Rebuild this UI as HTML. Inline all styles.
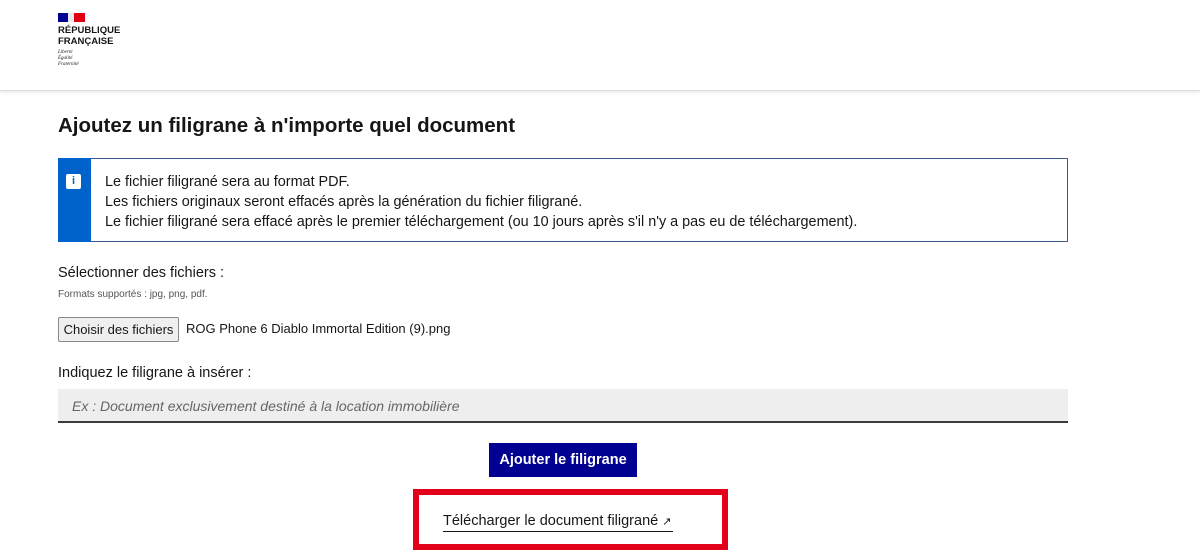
<!DOCTYPE html><html><head><meta charset="utf-8"><style>
body{margin:0;width:1200px;height:552px;overflow:hidden;background:#fff;font-family:"Liberation Sans",sans-serif;color:#161616;position:relative}
.a{position:absolute}
</style></head><body>
<div class="a" style="left:0;top:0;width:1200px;height:90px;border-bottom:1px solid #ddd;box-shadow:0 2px 3px rgba(0,0,0,.08)"></div>
<div class="a" style="left:58px;top:13px;width:10px;height:9px;background:#000091"></div>
<div class="a" style="left:68px;top:13px;width:6px;height:9px;background:#e8e8f0"></div>
<div class="a" style="left:74px;top:13px;width:11px;height:9px;background:#e1000f"></div>
<div class="a" style="left:58px;top:25px;font-size:9.5px;font-weight:bold;line-height:11px">RÉPUBLIQUE<br>FRANÇAISE</div>
<div class="a" style="left:58px;top:50px;font-size:5px;font-style:italic;line-height:6px;font-family:'Liberation Serif',serif">Liberté<br>Égalité<br>Fraternité</div>
<div class="a" style="left:58px;top:114px;font-size:20.5px;font-weight:bold">Ajoutez un filigrane à n'importe quel document</div>
<div class="a" style="left:58px;top:158px;width:1010px;height:84px;border:1px solid #3a5a8a;box-sizing:border-box"></div>
<div class="a" style="left:58px;top:158px;width:33px;height:84px;background:#0063cb"></div>
<div class="a" style="left:66px;top:174px;width:15px;height:15px;background:#fff;border-radius:2px;color:#0063cb;font-size:11px;font-weight:bold;text-align:center;line-height:15px">i</div>
<div class="a" style="left:105px;top:172px;font-size:14.4px;line-height:20px">Le fichier filigrané sera au format PDF.<br>Les fichiers originaux seront effacés après la génération du fichier filigrané.<br>Le fichier filigrané sera effacé après le premier téléchargement (ou 10 jours après s'il n'y a pas eu de téléchargement).</div>
<div class="a" style="left:58px;top:265px;font-size:14.5px">Sélectionner des fichiers :</div>
<div class="a" style="left:58px;top:289px;font-size:10px;color:#555">Formats supportés : jpg, png, pdf.</div>
<div class="a" style="left:58px;top:317px;width:121px;height:25px;border:1px solid #888;border-radius:2px;background:#efefef;box-sizing:border-box;font-size:13px;line-height:23px;text-align:center">Choisir des fichiers</div>
<div class="a" style="left:186px;top:321px;font-size:13px">ROG Phone 6 Diablo Immortal Edition (9).png</div>
<div class="a" style="left:58px;top:365px;font-size:14.5px">Indiquez le filigrane à insérer :</div>
<div class="a" style="left:58px;top:389px;width:1010px;height:34px;background:#eee;border-bottom:2px solid #3a3a3a;box-sizing:border-box"></div>
<div class="a" style="left:72px;top:398px;font-size:14px;font-style:italic;color:#666">Ex : Document exclusivement destiné à la location immobilière</div>
<div class="a" style="left:489px;top:443px;width:148px;height:34px;background:#000091;color:#fff;font-weight:bold;font-size:14.5px;text-align:center;line-height:34px">Ajouter le filigrane</div>
<div class="a" style="left:413px;top:489px;width:315px;height:61px;border:6px solid #e3001b;box-sizing:border-box"></div>
<div class="a" style="left:443px;top:512px;font-size:14.5px;border-bottom:1px solid #161616;line-height:18px;padding-right:2px">Télécharger le document filigrané <span style="font-size:11px">&#8599;</span></div>
</body></html>
